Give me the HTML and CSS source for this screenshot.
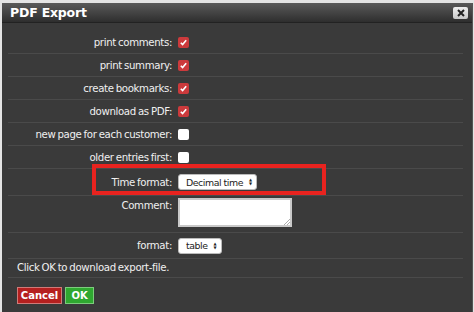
FILE: index.html
```html
<!DOCTYPE html>
<html>
<head>
<meta charset="utf-8">
<link rel="stylesheet" href="styles.css">
</head>
<body>
<div class="dialog">
  <div class="titlebar">
    <span class="title">PDF Export</span>
    <span class="close"><svg width="8" height="8" viewBox="0 0 8 8"><path d="M1 1L7 7M7 1L1 7" stroke="#222" stroke-width="2"/></svg></span>
  </div>
  <div class="content">
    <div class="row"><span class="label">print comments:</span><span class="cb on"><svg viewBox="0 0 11 11" width="11" height="11"><path d="M2.8 5.8L4.6 7.6L8.2 3.2" fill="none" stroke="#fff" stroke-width="1.6"/></svg></span></div>
    <div class="row"><span class="label">print summary:</span><span class="cb on"><svg viewBox="0 0 11 11" width="11" height="11"><path d="M2.8 5.8L4.6 7.6L8.2 3.2" fill="none" stroke="#fff" stroke-width="1.6"/></svg></span></div>
    <div class="row"><span class="label">create bookmarks:</span><span class="cb on"><svg viewBox="0 0 11 11" width="11" height="11"><path d="M2.8 5.8L4.6 7.6L8.2 3.2" fill="none" stroke="#fff" stroke-width="1.6"/></svg></span></div>
    <div class="row"><span class="label">download as PDF:</span><span class="cb on"><svg viewBox="0 0 11 11" width="11" height="11"><path d="M2.8 5.8L4.6 7.6L8.2 3.2" fill="none" stroke="#fff" stroke-width="1.6"/></svg></span></div>
    <div class="row"><span class="label">new page for each customer:</span><span class="cb"></span></div>
    <div class="row"><span class="label">older entries first:</span><span class="cb"></span></div>
    <div class="row row-select"><span class="label">Time format:</span><span class="select"><span>Decimal time</span><span class="arrows">&#9650;<br>&#9660;</span></span>
      <div class="highlight"></div>
    </div>
    <div class="row row-top"><span class="label">Comment:</span><span class="textarea"><svg class="grip" width="7" height="7" viewBox="0 0 7 7"><path d="M1 7L7 1M4 7L7 4" stroke="#999" stroke-width="0.8"/></svg></span></div>
    <div class="row row-select2"><span class="label">format:</span><span class="select"><span>table</span><span class="arrows">&#9650;<br>&#9660;</span></span></div>
    <div class="row note">Click OK to download export-file.</div>
    <div class="buttons"><span class="btn cancel">Cancel</span><span class="btn ok">OK</span></div>
  </div>
</div>
</body>
</html>
```
FILE: styles.css
```css
html, body { margin: 0; padding: 0; }
body {
  width: 474px; height: 312px; overflow: hidden;
  background: #e4e4e4;
  font-family: "DejaVu Sans", Verdana, sans-serif;
}
.dialog {
  margin: 3px 1px 0 2px;
  height: 309px;
  background: #3a3a3a;
  border-right: 1px solid #555;
  box-sizing: border-box;
}
.titlebar {
  height: 19px;
  background: linear-gradient(#5a5a5a, #2e2e2e);
  display: flex; align-items: center; justify-content: space-between;
  padding: 0 4px 0 8px;
  border-bottom: 1px solid #222;
}
.title { color: #fff; font-weight: bold; font-size: 12.5px; letter-spacing: -0.2px; }
.close {
  width: 15px; height: 12px; border-radius: 2px;
  background: linear-gradient(#f0f0f0, #c8c8c8);
  display: flex; align-items: center; justify-content: center;
}
.content { padding: 8px 9px 0 6px; position: relative; }
.row {
  display: grid; grid-template-columns: 164px auto; column-gap: 6px;
  align-items: center;
  height: 22px;
  border-bottom: 1px solid #4a4a4a;
  color: #f0f0f0; font-size: 10.2px; letter-spacing: -0.35px; word-spacing: -0.8px;
}
.label { text-align: right; white-space: nowrap; }
.cb {
  width: 11px; height: 11px; border-radius: 2px; background: #fff;
  display: block;
}
.cb.on { background: #cc3a3c; }
.cb svg { display: block; }
.row-select { height: 26px; position: relative; }
.select {
  display: inline-flex; align-items: center; justify-content: space-between;
  justify-self: start; white-space: nowrap;
  height: 16px; padding: 0 4px 0 7px;
  background: #fff; border-radius: 3px;
  border: 1px solid #bbb;
  color: #222; font-size: 9.4px; letter-spacing: -0.45px; word-spacing: 0;
  box-sizing: border-box; gap: 6px;
}
.arrows { font-size: 4px; line-height: 4px; color: #222; letter-spacing: 0; }
.highlight {
  position: absolute; left: 84px; top: -5px; width: 234px; height: 31px;
  border: 4px solid #e8231f; box-sizing: border-box;
}
.row-top { height: 36px; align-items: start; }
.row-top .label { padding-top: 4px; }
.textarea {
  margin-top: 2px;
  width: 114px; height: 29px; background: #fff;
  border: 2px solid #c9c9c9; box-sizing: border-box; position: relative;
}
.grip { position: absolute; right: 0; bottom: 0; }
.row-select2 { height: 25px; }
.note { display: block; height: 18px; line-height: 18px; padding-left: 9px; }
.buttons { display: flex; gap: 3px; padding: 9px 0 0 9px; }
.btn {
  height: 17px; box-sizing: border-box; color: #fff; font-weight: bold;
  font-size: 10px; display: flex; align-items: center; justify-content: center;
  border: 1px solid #999;
}
.cancel { width: 45px; background: #b5201f; border-color: #d07a78; }
.ok { width: 29px; background: #2fa830; border-color: #7ccc7c; }
```
